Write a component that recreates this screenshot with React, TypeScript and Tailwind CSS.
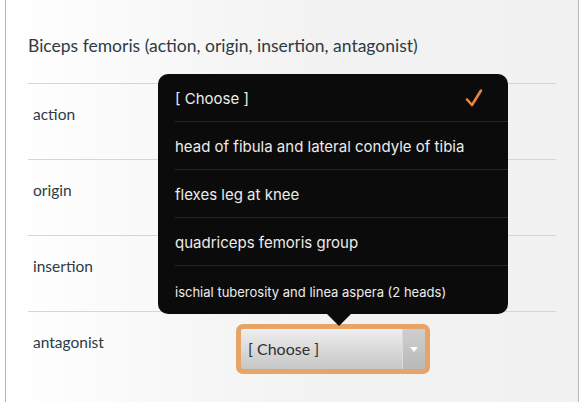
import React from "react";

const options = [
  "[ Choose ]",
  "head of fibula and lateral condyle of tibia",
  "flexes leg at knee",
  "quadriceps femoris group",
  "ischial tuberosity and linea aspera (2 heads)",
];

const rows = ["action", "origin", "insertion", "antagonist"];

function Check() {
  return (
    <svg width="20" height="20" viewBox="0 0 20 20" fill="none">
      <path d="M3 11.5 L8 17 L17 2.5" stroke="#e8843c" strokeWidth="2.6" strokeLinecap="round" strokeLinejoin="round" />
    </svg>
  );
}

function Picker() {
  return (
    <div className="absolute left-[152px] top-[74px] w-[350px] z-10">
      <div className="rounded-[10px] bg-[#0b0b0b] font-['Inter',sans-serif] text-[#ececec]">
        {options.map((o, i) => (
          <div key={o} className="pl-[17px]">
            <div
              className={`h-[48px] flex items-center justify-between pr-[24px] ${
                i < options.length - 1 ? "border-b border-[#262626]" : ""
              } ${i === options.length - 1 ? "text-[13px] pt-[6px]" : "text-[15px] pt-[3px]"}`}
            >
              <span>{o}</span>
              {i === 0 && (
                <span className="-mt-[3px]">
                  <Check />
                </span>
              )}
            </div>
          </div>
        ))}
      </div>
      <div className="ml-[169px] w-0 h-0 border-x-[12px] border-x-transparent border-t-[12px] border-t-[#0b0b0b]" />
    </div>
  );
}

function Select() {
  return (
    <div className="mt-[12px] w-[194px] h-[50px] rounded-[7px] bg-[#e6a466] p-[5px]">
      <div className="h-full rounded-[2px] bg-gradient-to-b from-[#efefef] to-[#c6c6c6] flex">
        <div className="flex-1 flex items-center pl-[7px] text-[16px] text-[#2f2f2f]">[ Choose ]</div>
        <div className="w-[23px] bg-gradient-to-b from-[#cfcfcf] to-[#b9b9b9] border-l border-[#dcdcdc] flex items-center justify-center">
          <div className="w-0 h-0 border-x-[4px] border-x-transparent border-t-[5px] border-t-white" />
        </div>
      </div>
    </div>
  );
}

export default function App() {
  return (
    <div className="w-[583px] h-[402px] bg-white overflow-hidden">
      <div className="relative ml-[5px] w-[574px] h-[402px] border-x border-[#b4b4b4] bg-gradient-to-r from-white via-[#f3f3f3] to-[#f1f1f1] font-['Lato',sans-serif] text-[#2d3b45]">
        <div className="px-[22px]">
          <div className="h-[83px] pt-[34px] text-[17.5px] leading-6">
            Biceps femoris (action, origin, insertion, antagonist)
          </div>
          {rows.map((r) => (
            <div key={r} className="h-[76px] border-t border-[#d6d6d6] flex">
              <div className="w-[208px] pl-[5px] pt-[20px] text-[15.5px] leading-5">{r}</div>
              {r === "antagonist" && <Select />}
            </div>
          ))}
        </div>
        <Picker />
      </div>
    </div>
  );
}
